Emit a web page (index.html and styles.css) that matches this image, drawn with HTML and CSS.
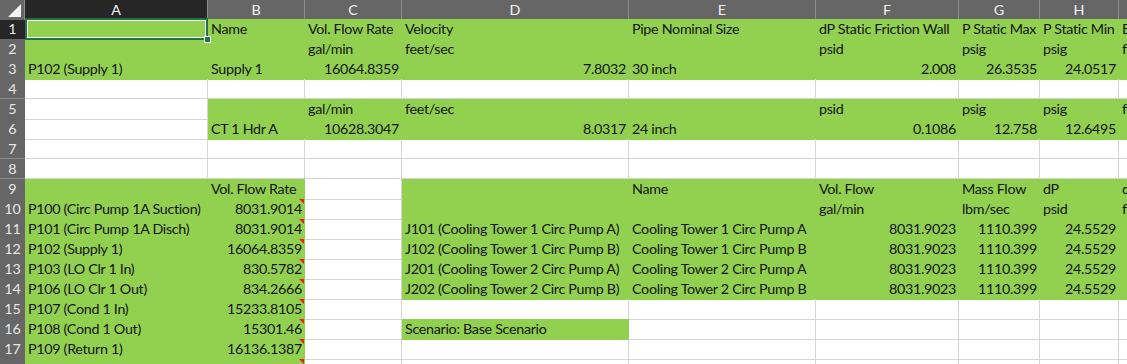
FILE: index.html
```html
<!DOCTYPE html>
<html>
<head>
<meta charset="utf-8">
<link rel="stylesheet" href="styles.css">
</head>
<body>
<div class="sheet">
  <div class="row hdr">
    <div class="corner"></div>
    <div class="ch sel">A</div><div class="ch">B</div><div class="ch">C</div><div class="ch">D</div><div class="ch">E</div><div class="ch">F</div><div class="ch">G</div><div class="ch">H</div><div class="ch">I</div>
  </div>

  <div class="row">
    <div class="rh sel">1</div>
    <div class="c g active"></div><div class="c g">Name</div><div class="c g">Vol. Flow Rate</div><div class="c g">Velocity</div><div class="c g">Pipe Nominal Size</div><div class="c g">dP Static Friction Wall</div><div class="c g">P Static Max</div><div class="c g">P Static Min</div><div class="c g">E</div>
  </div>
  <div class="row">
    <div class="rh">2</div>
    <div class="c g"></div><div class="c g"></div><div class="c g">gal/min</div><div class="c g">feet/sec</div><div class="c g"></div><div class="c g">psid</div><div class="c g">psig</div><div class="c g">psig</div><div class="c g">f</div>
  </div>
  <div class="row">
    <div class="rh">3</div>
    <div class="c g">P102 (Supply 1)</div><div class="c g">Supply 1</div><div class="c g r">16064.8359</div><div class="c g r">7.8032</div><div class="c g">30 inch</div><div class="c g r">2.008</div><div class="c g r">26.3535</div><div class="c g r">24.0517</div><div class="c g"></div>
  </div>
  <div class="row">
    <div class="rh">4</div>
    <div class="c"></div><div class="c"></div><div class="c"></div><div class="c"></div><div class="c"></div><div class="c"></div><div class="c"></div><div class="c"></div><div class="c"></div>
  </div>
  <div class="row">
    <div class="rh">5</div>
    <div class="c"></div><div class="c g"></div><div class="c g">gal/min</div><div class="c g">feet/sec</div><div class="c g"></div><div class="c g">psid</div><div class="c g">psig</div><div class="c g">psig</div><div class="c g">f</div>
  </div>
  <div class="row">
    <div class="rh">6</div>
    <div class="c"></div><div class="c g">CT 1 Hdr A</div><div class="c g r">10628.3047</div><div class="c g r">8.0317</div><div class="c g">24 inch</div><div class="c g r">0.1086</div><div class="c g r">12.758</div><div class="c g r">12.6495</div><div class="c g"></div>
  </div>
  <div class="row">
    <div class="rh">7</div>
    <div class="c"></div><div class="c"></div><div class="c"></div><div class="c"></div><div class="c"></div><div class="c"></div><div class="c"></div><div class="c"></div><div class="c"></div>
  </div>
  <div class="row">
    <div class="rh">8</div>
    <div class="c"></div><div class="c"></div><div class="c"></div><div class="c"></div><div class="c"></div><div class="c"></div><div class="c"></div><div class="c"></div><div class="c"></div>
  </div>
  <div class="row">
    <div class="rh">9</div>
    <div class="c g"></div><div class="c g">Vol. Flow Rate</div><div class="c"></div><div class="c g"></div><div class="c g">Name</div><div class="c g">Vol. Flow</div><div class="c g">Mass Flow</div><div class="c g">dP</div><div class="c g">d</div>
  </div>
  <div class="row">
    <div class="rh">10</div>
    <div class="c g">P100 (Circ Pump 1A Suction)</div><div class="c g r cm">8031.9014</div><div class="c"></div><div class="c g"></div><div class="c g"></div><div class="c g">gal/min</div><div class="c g">lbm/sec</div><div class="c g">psid</div><div class="c g">f</div>
  </div>
  <div class="row">
    <div class="rh">11</div>
    <div class="c g">P101 (Circ Pump 1A Disch)</div><div class="c g r cm">8031.9014</div><div class="c"></div><div class="c g">J101 (Cooling Tower 1 Circ Pump A)</div><div class="c g">Cooling Tower 1 Circ Pump A</div><div class="c g r">8031.9023</div><div class="c g r">1110.399</div><div class="c g r">24.5529</div><div class="c g"></div>
  </div>
  <div class="row">
    <div class="rh">12</div>
    <div class="c g">P102 (Supply 1)</div><div class="c g r cm">16064.8359</div><div class="c"></div><div class="c g">J102 (Cooling Tower 1 Circ Pump B)</div><div class="c g">Cooling Tower 1 Circ Pump B</div><div class="c g r">8031.9023</div><div class="c g r">1110.399</div><div class="c g r">24.5529</div><div class="c g"></div>
  </div>
  <div class="row">
    <div class="rh">13</div>
    <div class="c g">P103 (LO Clr 1 In)</div><div class="c g r cm">830.5782</div><div class="c"></div><div class="c g">J201 (Cooling Tower 2 Circ Pump A)</div><div class="c g">Cooling Tower 2 Circ Pump A</div><div class="c g r">8031.9023</div><div class="c g r">1110.399</div><div class="c g r">24.5529</div><div class="c g"></div>
  </div>
  <div class="row">
    <div class="rh">14</div>
    <div class="c g">P106 (LO Clr 1 Out)</div><div class="c g r cm">834.2666</div><div class="c"></div><div class="c g">J202 (Cooling Tower 2 Circ Pump B)</div><div class="c g">Cooling Tower 2 Circ Pump B</div><div class="c g r">8031.9023</div><div class="c g r">1110.399</div><div class="c g r">24.5529</div><div class="c g"></div>
  </div>
  <div class="row">
    <div class="rh">15</div>
    <div class="c g">P107 (Cond 1 In)</div><div class="c g r cm">15233.8105</div><div class="c"></div><div class="c"></div><div class="c"></div><div class="c"></div><div class="c"></div><div class="c"></div><div class="c"></div>
  </div>
  <div class="row">
    <div class="rh">16</div>
    <div class="c g">P108 (Cond 1 Out)</div><div class="c g r cm">15301.46</div><div class="c"></div><div class="c g">Scenario: Base Scenario</div><div class="c"></div><div class="c"></div><div class="c"></div><div class="c"></div><div class="c"></div>
  </div>
  <div class="row">
    <div class="rh">17</div>
    <div class="c g">P109 (Return 1)</div><div class="c g r cm">16136.1387</div><div class="c"></div><div class="c"></div><div class="c"></div><div class="c"></div><div class="c"></div><div class="c"></div><div class="c"></div>
  </div>
  <div class="row">
    <div class="rh">18</div>
    <div class="c g"></div><div class="c g r cm"></div><div class="c"></div><div class="c"></div><div class="c"></div><div class="c"></div><div class="c"></div><div class="c"></div><div class="c"></div>
  </div>
</div>
</body>
</html>
```

FILE: styles.css
```css
html, body {
  margin: 0;
  padding: 0;
  background: #ffffff;
  overflow: hidden;
}
.sheet {
  width: 1127px;
  height: 364px;
  overflow: hidden;
  font-family: Lato, "Open Sans", sans-serif;
  font-size: 14.3px;
  letter-spacing: -0.3px;
  color: #141414;
}
.row {
  display: grid;
  grid-template-columns: 25px 183px 97px 97px 227px 187px 143px 81px 79px 40px;
  height: 20px;
}
.row.hdr {
  height: 19px;
}
.corner {
  background: #666666;
  border-right: 1px solid #8c8c8c;
  position: relative;
  box-sizing: border-box;
}
.corner::after {
  content: "";
  position: absolute;
  right: 3px;
  bottom: 3px;
  width: 0;
  height: 0;
  border-left: 13px solid transparent;
  border-bottom: 13px solid #f2f2f2;
}
.ch {
  background: #666666;
  color: #f2f2f2;
  text-align: center;
  line-height: 19px;
  letter-spacing: 0;
  border-right: 1px solid #8c8c8c;
  box-sizing: border-box;
}
.ch.sel {
  background: #262626;
  border-bottom: 1px solid #217346;
}
.rh {
  background: #666666;
  color: #e6e6e6;
  text-align: center;
  line-height: 19px;
  letter-spacing: 0;
  border-bottom: 1px solid #8c8c8c;
  box-sizing: border-box;
}
.rh.sel {
  background: #262626;
}
.c {
  box-sizing: border-box;
  border-right: 1px solid #d4d4d4;
  border-bottom: 1px solid #d4d4d4;
  line-height: 20px;
  padding: 0 3px;
  white-space: nowrap;
  overflow: visible;
  position: relative;
}
.c.g {
  background: #92d050;
  border-color: #92d050;
}
.c.r {
  text-align: right;
  padding-right: 2px;
}
.c.cm::after {
  content: "";
  position: absolute;
  top: 0;
  right: 0;
  width: 0;
  height: 0;
  border-left: 5px solid transparent;
  border-top: 5px solid #e02810;
}
.c.active::before {
  content: "";
  position: absolute;
  left: 0;
  top: -1px;
  right: -1px;
  bottom: -1px;
  border: 2px solid #217346;
  box-shadow: inset 0 0 0 1px #ffffff;
  z-index: 2;
}
.c.active::after {
  content: "";
  position: absolute;
  right: -4px;
  bottom: -4px;
  width: 5px;
  height: 5px;
  background: #217346;
  border: 1px solid #ffffff;
  z-index: 3;
}
```
